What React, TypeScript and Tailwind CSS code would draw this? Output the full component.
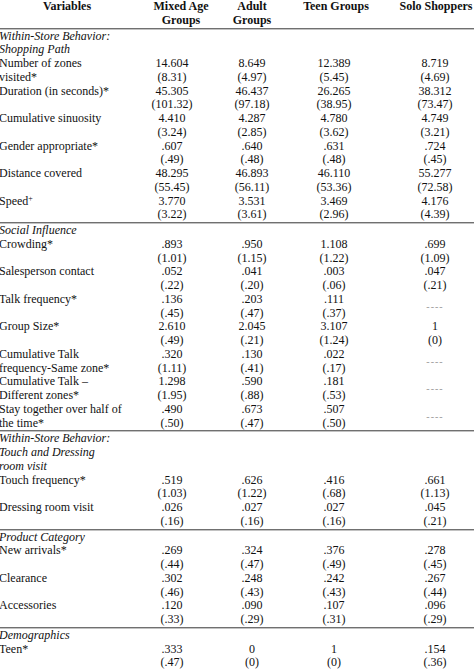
import React from "react";

type Row = {
  label: React.ReactNode[];
  vals: (string[] | null)[];
};

type Section = {
  title: string[];
  rows: Row[];
};

const sections: Section[] = [
  {
    title: ["Within-Store Behavior:", "Shopping Path"],
    rows: [
      {
        label: ["Number of zones", "visited*"],
        vals: [["14.604", "(8.31)"], ["8.649", "(4.97)"], ["12.389", "(5.45)"], ["8.719", "(4.69)"]],
      },
      {
        label: ["Duration (in seconds)*"],
        vals: [["45.305", "(101.32)"], ["46.437", "(97.18)"], ["26.265", "(38.95)"], ["38.312", "(73.47)"]],
      },
      {
        label: ["Cumulative sinuosity"],
        vals: [["4.410", "(3.24)"], ["4.287", "(2.85)"], ["4.780", "(3.62)"], ["4.749", "(3.21)"]],
      },
      {
        label: ["Gender appropriate*"],
        vals: [[".607", "(.49)"], [".640", "(.48)"], [".631", "(.48)"], [".724", "(.45)"]],
      },
      {
        label: ["Distance covered"],
        vals: [["48.295", "(55.45)"], ["46.893", "(56.11)"], ["46.110", "(53.36)"], ["55.277", "(72.58)"]],
      },
      {
        label: [
          <>
            Speed<sup className="text-[8px] leading-none">+</sup>
          </>,
        ],
        vals: [["3.770", "(3.22)"], ["3.531", "(3.61)"], ["3.469", "(2.96)"], ["4.176", "(4.39)"]],
      },
    ],
  },
  {
    title: ["Social Influence"],
    rows: [
      {
        label: ["Crowding*"],
        vals: [[".893", "(1.01)"], [".950", "(1.15)"], ["1.108", "(1.22)"], [".699", "(1.09)"]],
      },
      {
        label: ["Salesperson contact"],
        vals: [[".052", "(.22)"], [".041", "(.20)"], [".003", "(.06)"], [".047", "(.21)"]],
      },
      {
        label: ["Talk frequency*"],
        vals: [[".136", "(.45)"], [".203", "(.47)"], [".111", "(.37)"], null],
      },
      {
        label: ["Group Size*"],
        vals: [["2.610", "(.49)"], ["2.045", "(.21)"], ["3.107", "(1.24)"], ["1", "(0)"]],
      },
      {
        label: ["Cumulative Talk", "frequency-Same zone*"],
        vals: [[".320", "(1.11)"], [".130", "(.41)"], [".022", "(.17)"], null],
      },
      {
        label: ["Cumulative Talk \u2013", "Different zones*"],
        vals: [["1.298", "(1.95)"], [".590", "(.88)"], [".181", "(.53)"], null],
      },
      {
        label: ["Stay together over half of", "the time*"],
        vals: [[".490", "(.50)"], [".673", "(.47)"], [".507", "(.50)"], null],
      },
    ],
  },
  {
    title: ["Within-Store Behavior:", "Touch and Dressing", "room visit"],
    rows: [
      {
        label: ["Touch frequency*"],
        vals: [[".519", "(1.03)"], [".626", "(1.22)"], [".416", "(.68)"], [".661", "(1.13)"]],
      },
      {
        label: ["Dressing room visit"],
        vals: [[".026", "(.16)"], [".027", "(.16)"], [".027", "(.16)"], [".045", "(.21)"]],
      },
    ],
  },
  {
    title: ["Product Category"],
    rows: [
      {
        label: ["New arrivals*"],
        vals: [[".269", "(.44)"], [".324", "(.47)"], [".376", "(.49)"], [".278", "(.45)"]],
      },
      {
        label: ["Clearance"],
        vals: [[".302", "(.46)"], [".248", "(.43)"], [".242", "(.43)"], [".267", "(.44)"]],
      },
      {
        label: ["Accessories"],
        vals: [[".120", "(.33)"], [".090", "(.29)"], [".107", "(.31)"], [".096", "(.29)"]],
      },
    ],
  },
  {
    title: ["Demographics"],
    rows: [
      {
        label: ["Teen*"],
        vals: [[".333", "(.47)"], ["0", "(0)"], ["1", "(0)"], [".154", "(.36)"]],
      },
    ],
  },
];

const cols = "grid grid-cols-[136px_74px_86px_78px_124px]";

// double grey rule between sections
const Rule = () => (
  <div className="h-[2px] border-t border-[#707070] bg-[#c2c2c2]" />
);

const DataRow = ({ row }: { row: Row }) => (
  <div className={cols}>
    <div className="whitespace-nowrap">
      {row.label.map((l, i) => (
        <div key={i}>{l}</div>
      ))}
    </div>
    {row.vals.map((v, i) =>
      v ? (
        <div key={i} className="text-center">
          {v.map((x, j) => (
            <div key={j}>{x}</div>
          ))}
        </div>
      ) : (
        <div
          key={i}
          className="flex items-center justify-center text-[10px] tracking-[1px] text-[#9a9a9a]"
        >
          ----
        </div>
      )
    )}
  </div>
);

export default function App() {
  return (
    <div className="w-[474px] h-[669px] overflow-hidden bg-white">
      <div
        className="w-[498px] -ml-[1px] text-[12px] leading-[13.75px] text-[#111]"
        style={{ fontFamily: '"Liberation Serif", "Times New Roman", serif' }}
      >
        {/* header */}
        <div className={`${cols} font-bold`}>
          <div className="text-center">Variables</div>
          <div className="text-center pl-[18px]">
            <div>Mixed Age</div>
            <div>Groups</div>
          </div>
          <div className="text-center">
            <div>Adult</div>
            <div>Groups</div>
          </div>
          <div className="text-center pl-[4px]">Teen Groups</div>
          <div className="text-center pl-[2px]">Solo Shoppers</div>
        </div>
        <Rule />

        {sections.map((s, si) => (
          <div key={si}>
            <div className="italic">
              {s.title.map((t, i) => (
                <div key={i}>{t}</div>
              ))}
            </div>
            {s.rows.map((r, ri) => (
              <DataRow key={ri} row={r} />
            ))}
            {si < sections.length - 1 && <Rule />}
          </div>
        ))}
      </div>
    </div>
  );
}
